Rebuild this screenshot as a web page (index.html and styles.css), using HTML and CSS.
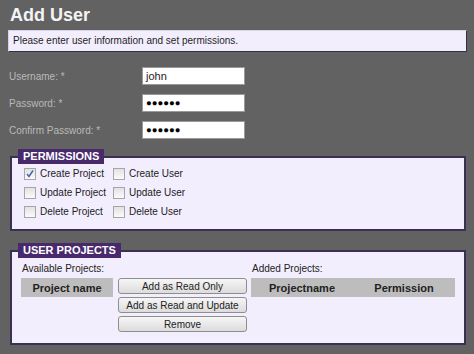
FILE: index.html
```html
<!DOCTYPE html>
<html lang="en">

<head>
    <meta charset="UTF-8">
    <meta name="viewport" content="width=device-width, initial-scale=1.0">
    <title>Add User</title>
    <link rel="stylesheet" href="styles.css">
</head>

<body>

    <h1 class="title">Add User</h1>

    <div class="info">Please enter user information and set permissions.</div>

    <div class="user-form">
        <div class="form-row">
            <label class="form-label">Username: *</label>
            <div class="text-input">john</div>
        </div>
        <div class="form-row">
            <label class="form-label">Password: *</label>
            <div class="text-input dots">&#9679;&#9679;&#9679;&#9679;&#9679;&#9679;</div>
        </div>
        <div class="form-row">
            <label class="form-label">Confirm Password: *</label>
            <div class="text-input dots">&#9679;&#9679;&#9679;&#9679;&#9679;&#9679;</div>
        </div>
    </div>

    <fieldset class="group permissions">
        <legend>PERMISSIONS</legend>
        <div class="perm-grid">
            <label class="perm"><span class="check checked">
                <svg width="10" height="10" viewBox="0 0 10 10"><path d="M2 5 L4 7.5 L8 1.5" fill="none" stroke="#4a5fa8" stroke-width="1.4"/></svg>
            </span>Create Project</label>
            <label class="perm"><span class="check"></span>Create User</label>
            <label class="perm"><span class="check"></span>Update Project</label>
            <label class="perm"><span class="check"></span>Update User</label>
            <label class="perm"><span class="check"></span>Delete Project</label>
            <label class="perm"><span class="check"></span>Delete User</label>
        </div>
    </fieldset>

    <fieldset class="group projects">
        <legend>USER PROJECTS</legend>
        <div class="project-grid">
            <div class="col-label">Available Projects:</div>
            <div></div>
            <div class="col-label">Added Projects:</div>

            <div class="table-head">
                <span>Project name</span>
            </div>
            <div class="buttons">
                <button class="btn">Add as Read Only</button>
                <button class="btn">Add as Read and Update</button>
                <button class="btn">Remove</button>
            </div>
            <div class="table-head two">
                <span>Projectname</span>
                <span>Permission</span>
            </div>
        </div>
    </fieldset>

</body>

</html>
```

FILE: styles.css
```css
* {
    margin: 0;
    padding: 0;
    box-sizing: border-box;
    font-family: "Liberation Sans", Arial, sans-serif;
}

body {
    background-color: #626262;
    width: 474px;
    height: 354px;
    overflow: hidden;
}

.title {
    color: #f4f4f4;
    font-size: 18px;
    font-weight: bold;
    line-height: 22px;
    padding: 4px 0 0 10px;
    height: 30px;
}

.info {
    margin-left: 8px;
    width: 459px;
    height: 22px;
    background-color: #f3eefd;
    border: 1px solid #d9d2e6;
    border-right-color: #34303f;
    border-bottom-color: #34303f;
    font-size: 10px;
    line-height: 20px;
    padding-left: 4px;
    color: #1e1e1e;
}

.user-form {
    display: flex;
    flex-direction: column;
    gap: 9px;
    margin-top: 15px;
}

.form-row {
    display: flex;
    align-items: center;
    height: 18px;
}

.form-label {
    width: 142px;
    padding-left: 9px;
    font-size: 10px;
    color: #b9b9b9;
}

.text-input {
    width: 103px;
    height: 18px;
    background-color: #fff;
    border: 1px solid #9a9a9a;
    font-size: 11px;
    line-height: 16px;
    padding-left: 3px;
    color: #222;
}

.text-input.dots {
    font-size: 9.5px;
    color: #000;
}

.group {
    margin: 10px 8px 0 10px;
    border: 2px solid #3b3050;
    background-color: #f3eefd;
    padding: 0;
}

.group legend {
    margin-left: 6px;
    padding: 1px 5px;
    background-color: #47296c;
    color: #fff;
    font-size: 11px;
    font-weight: bold;
    line-height: 13px;
}

.perm-grid {
    display: grid;
    grid-template-columns: 89px auto;
    grid-auto-rows: 19px;
    padding: 0 0 8px 12px;
}

.perm {
    display: flex;
    align-items: center;
    font-size: 10px;
    color: #222;
}

.check {
    width: 12px;
    height: 12px;
    margin-right: 4px;
    border: 1px solid #a6a6a6;
    background: linear-gradient(#e2e2e2, #fbfbfb);
    display: flex;
    align-items: center;
    justify-content: center;
}

.projects {
    margin-top: 12px;
}

.project-grid {
    display: grid;
    grid-template-columns: 92px 129px 203px;
    column-gap: 5px;
    padding: 5px 0 11px 9px;
}

.project-grid> :nth-child(3n) {
    margin-left: -1px;
}

.col-label {
    font-size: 10px;
    line-height: 12px;
    height: 15px;
    padding-left: 1px;
    color: #222;
}

.table-head {
    height: 19px;
    background-color: #bdbdbd;
    font-size: 11px;
    font-weight: bold;
    color: #222;
    display: flex;
    align-items: center;
    justify-content: center;
}

.table-head.two span {
    flex: 1;
    text-align: center;
}

.buttons {
    display: flex;
    flex-direction: column;
    gap: 3px;
}

.btn {
    height: 16px;
    border: 1px solid #8e8e8e;
    border-radius: 3px;
    background: linear-gradient(#f6f6f6, #dcdcdc);
    font-size: 10px;
    color: #222;
}
```
